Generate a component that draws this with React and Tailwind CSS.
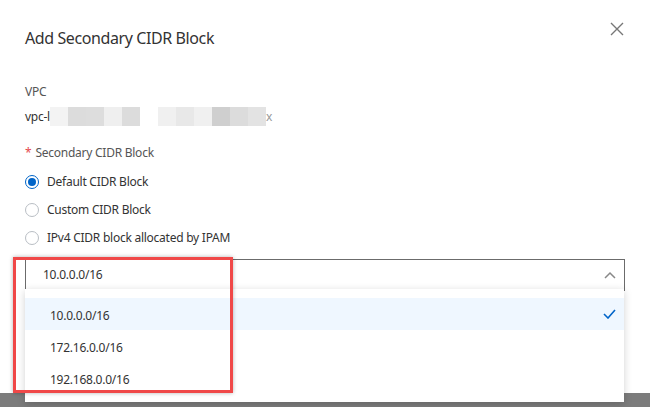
import React from 'react';

const blur = ['#f3f3f3', '#dcdcdc', '#dddddd', '#efefef', '#dcdcdc', '#ffffff', '#f0f0f0', '#e8e8e8', '#f0f0f0', '#cfcfcf', '#dcdcdc', '#e3e3e3'];

const options = [
  { label: 'Default CIDR Block', checked: true },
  { label: 'Custom CIDR Block' },
  { label: 'IPv4 CIDR block allocated by IPAM' },
];

const cidrs = ['10.0.0.0/16', '172.16.0.0/16', '192.168.0.0/16'];

const Radio = ({ checked }) => (
  <span
    className={`w-[14px] h-[14px] rounded-full border flex items-center justify-center bg-white ${checked ? 'border-[#0064c8]' : 'border-[#b9bec4]'}`}
  >
    {checked && <span className="w-[8px] h-[8px] rounded-full bg-[#0064c8]" />}
  </span>
);

export default function App() {
  return (
    <div className="w-[650px] h-[407px] bg-[#7c7c7c] overflow-hidden relative font-['Noto_Sans',sans-serif] text-[#333] tracking-[-0.25px]">
      <div className="h-[393px] bg-white px-[25px]">
        <div className="flex justify-between pt-[22px]">
          <h2 className="mt-[5px] text-[16px] leading-[22px] text-[#333] tracking-[-0.4px]">Add Secondary CIDR Block</h2>
          <button className="w-[14px] h-[14px] mr-[1px] text-[#777]">
            <svg viewBox="0 0 14 14" width="14" height="14" fill="none" stroke="currentColor" strokeWidth="1.4">
              <path d="M1 1L13 13M13 1L1 13" />
            </svg>
          </button>
        </div>

        <div className="mt-[34px] text-[12px] leading-[18px] text-[#555]">VPC</div>
        <div className="mt-[6px] flex items-center text-[12px] leading-[18px]">
          <span>vpc-l</span>
          <div className="flex h-[19px]">
            {blur.map((c, i) => (
              <span key={i} className="w-[18px] h-full" style={{ backgroundColor: c }} />
            ))}
          </div>
          <span className="text-[#999]">x</span>
        </div>

        <div className="mt-[18px] text-[12px] leading-[18px] text-[#555]">
          <span className="text-[#e5484d] mr-[4px]">*</span>Secondary CIDR Block
        </div>

        <div className="mt-[10px] flex flex-col gap-[8px]">
          {options.map((o) => (
            <label key={o.label} className="h-[20px] flex items-center gap-[8px] text-[12px]">
              <Radio checked={o.checked} />
              <span>{o.label}</span>
            </label>
          ))}
        </div>

        <div className="mt-[11px] h-[32px] border border-[#6b6b6b] flex items-center justify-between pl-[17px] pr-[8px] text-[12px]">
          <span>10.0.0.0/16</span>
          <svg viewBox="0 0 12 8" width="12" height="8" fill="none" stroke="#888" strokeWidth="1.5">
            <path d="M1 7L6 2L11 7" />
          </svg>
        </div>
      </div>

      <div className="absolute left-[25px] top-[289px] w-[599px] h-[113px] bg-white shadow-[0_2px_8px_rgba(0,0,0,0.18)] py-[9px]">
        {cidrs.map((c, i) => (
          <div
            key={c}
            className={`h-[32px] flex items-center justify-between pl-[25px] pr-[8px] pt-[4px] text-[12px] ${i === 0 ? 'bg-[#eff7ff]' : ''}`}
          >
            <span>{c}</span>
            {i === 0 && (
              <svg viewBox="0 0 13 10" width="13" height="10" fill="none" stroke="#0064c8" strokeWidth="1.6" className="-mt-[4px]">
                <path d="M1 5L5 9L12 1" />
              </svg>
            )}
          </div>
        ))}
      </div>

      <div className="absolute left-[13px] top-[257px] w-[220px] h-[136px] border-[3px] border-[#f04848] shadow-[0_0_4px_rgba(0,0,0,0.3)]" />
    </div>
  );
}
